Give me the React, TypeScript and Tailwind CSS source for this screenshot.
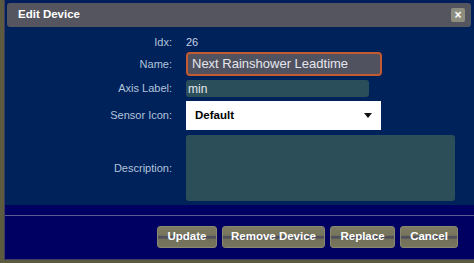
import React from "react";

const btn =
  "h-[22px] rounded-[3px] border border-[#8a8870] text-white font-bold text-[11.5px] bg-[linear-gradient(to_bottom,#7d7b62_0%,#76745c_42%,#50505c_46%,#50505c_56%,#72705a_60%,#77755d_100%)] flex items-center justify-center";

export default function App() {
  return (
    <div
      className="w-[474px] h-[263px] bg-[#5d5b3f] overflow-hidden"
      style={{ fontFamily: '"Liberation Sans", Arial, sans-serif' }}
    >
      <div className="ml-[4px] w-[474px] h-[260px] bg-[#001f5a] border-l border-b border-[#3c3c64] flex flex-col">
        {/* title bar */}
        <div className="mx-[2px] mt-[3px] h-[24px] bg-[#55555f] rounded-[3px] flex items-center pl-[11px] pr-[6px] w-[464px]">
          <span className="text-white font-bold text-[11.5px] flex-1">Edit Device</span>
          <div className="w-[14px] h-[14px] bg-[#8e8e80] rounded-[2px] flex items-center justify-center text-white font-bold text-[12px] leading-none">
            ×
          </div>
        </div>
        {/* content */}
        <div className="bg-[#00225a] h-[178px] text-[11px] text-[#b4c2dc] flex flex-col">
          <div className="flex items-center mt-[7px] h-[16px]">
            <div className="w-[167px] text-right">Idx:</div>
            <div className="ml-[14px] text-[#c8d2e6]">26</div>
          </div>
          <div className="flex items-center mt-[2px] h-[24px]">
            <div className="w-[167px] text-right">Name:</div>
            <div className="ml-[14px] w-[196px] h-[24px] bg-[#51525f] border-2 border-[#c45a30] rounded-[4px] flex items-center pl-[4px] text-[13px] text-[#e4e6ee]">
              Next Rainshower Leadtime
            </div>
          </div>
          <div className="flex items-center mt-[4px] h-[17px]">
            <div className="w-[167px] text-right">Axis Label:</div>
            <div className="ml-[14px] w-[183px] h-[17px] bg-[#2b4f5a] rounded-[3px] flex items-center pl-[2px] text-[12px] text-[#e4e8ee]">
              min
            </div>
          </div>
          <div className="flex items-center mt-[4px] h-[29px]">
            <div className="w-[167px] text-right">Sensor Icon:</div>
            <div className="ml-[14px] w-[195px] h-[29px] bg-white flex items-center pl-[9px] pr-[9px] text-[11.5px] text-black font-bold">
              <span className="flex-1">Default</span>
              <svg width="8" height="5" viewBox="0 0 8 5">
                <path d="M0 0 L8 0 L4 5 Z" fill="#111" />
              </svg>
            </div>
          </div>
          <div className="flex items-center mt-[5px] h-[66px]">
            <div className="w-[167px] text-right">Description:</div>
            <div className="ml-[14px] w-[269px] h-[66px] bg-[#2b4e58] rounded-[3px]" />
          </div>
        </div>
        {/* button pane */}
        <div className="flex-1 bg-[#000062] flex flex-col">
          <div className="mt-[10px] h-[1px] bg-[#5b5b8e]" />
          <div className="mt-[10px] flex gap-[5px] pl-[152px]">
            <div className={btn + " w-[60px]"}>Update</div>
            <div className={btn + " w-[103px]"}>Remove Device</div>
            <div className={btn + " w-[65px]"}>Replace</div>
            <div className={btn + " w-[58px]"}>Cancel</div>
          </div>
        </div>
      </div>
    </div>
  );
}
